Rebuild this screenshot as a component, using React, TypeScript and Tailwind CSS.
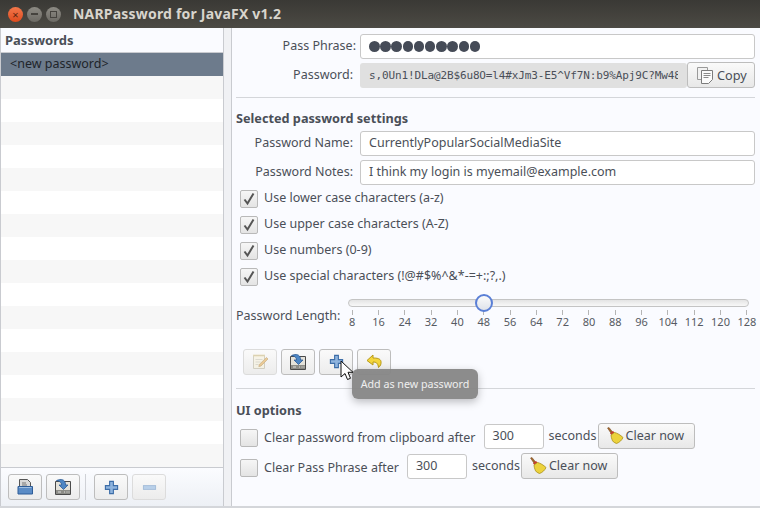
const rows = Array.from({ length: 18 }, (_, i) => i);
const ticks = [8, 16, 24, 32, 40, 48, 56, 64, 72, 80, 88, 96, 104, 112, 120, 128];

function PlusIcon() {
  return (
    <svg width="15" height="15" viewBox="0 0 16 16">
      <path d="M6 1.500h4v4.500h4.500v4H10v4.500H6V10H1.500V6H6z" fill="#8fb4de" stroke="#3e6ea8" strokeWidth="1.200" />
    </svg>
  );
}

function MinusIcon() {
  return (
    <svg width="15" height="15" viewBox="0 0 16 16">
      <rect x="1.500" y="6" width="13" height="4" fill="#b9d0e9" stroke="#a3bcd8" strokeWidth="1" />
    </svg>
  );
}

function OpenIcon() {
  return (
    <svg width="18" height="18" viewBox="0 0 18 18">
      <path d="M3.500 1.500h8l3 3v5h-11z" fill="#d8d8d8" stroke="#555" />
      <path d="M6 5h4M6 7h5" stroke="#777" />
      <path d="M2 8.500h14.500v7.500H2z" fill="#5b8cc6" stroke="#2f5d98" />
      <path d="M3 9.500h12.500" stroke="#9dbee2" />
    </svg>
  );
}

function ImportIcon() {
  return (
    <svg width="20" height="18" viewBox="0 0 20 18">
      <path d="M2.500 3.500h15v13h-15z" fill="#e4e2da" stroke="#4a4a4a" />
      <path d="M3 12h14v4H3z" fill="#8c8c86" />
      <path d="M5 14h3M11 14h1M13.500 14h1M15.500 14h1" stroke="#dcdcdc" />
      <path d="M3.500 2.500c5-2 8-1 9 3V7h2.500l-4.500 4.500L6 7h2.500V6c-.5-2-2.500-3-5-3.500z" fill="#4d86c4" stroke="#2d5c96" strokeWidth="0.8" />
    </svg>
  );
}

function NoteIcon() {
  return (
    <svg width="18" height="18" viewBox="0 0 18 18" opacity="0.55">
      <path d="M2.500 2.500h11v13h-11z" fill="#f7f2dc" stroke="#b9b49c" />
      <path d="M3 1.500v2M5 1.500v2M7 1.500v2M9 1.500v2M11 1.500v2M13 1.500v2" stroke="#d2b45a" />
      <path d="M4.500 6.500h7M4.500 9h5M4.500 11.500h3" stroke="#c9c5b2" />
      <path d="M15.500 4.500l1.500 1.500-7 7-2.200.6.600-2.200z" fill="#e4a94a" stroke="#a87a2c" strokeWidth="0.7" />
    </svg>
  );
}

function UndoIcon() {
  return (
    <svg width="18" height="18" viewBox="0 0 18 18">
      <path d="M8 2L2 7.500 8 12V9c3 0 5 1 5.500 5.500 2-1.500 2.800-3.500 2.500-6C15.500 5.500 12 5 8 5z" fill="#f4d63c" stroke="#b79a16" strokeWidth="1" strokeLinejoin="round" />
    </svg>
  );
}

function BroomIcon() {
  return (
    <svg width="18" height="18" viewBox="0 0 18 18">
      <path d="M1.500 1l1.500-.5L7 5.500 5.500 7z" fill="#a5662a" stroke="#6d4318" strokeWidth="0.5" />
      <path d="M4 6.500L7 4l1.500 1.500-3 2.500z" fill="#c8382c" />
      <path d="M5 8l3.500-2.500c2.500.5 6 2.500 8.500 5-1 2.500-3.500 5-6.500 6-2.500-1-4-2-4.500-4-.5-1.500-1-3-1-4.500z" fill="#ecd23c" stroke="#a88f18" strokeWidth="0.8" />
    </svg>
  );
}

function CopyIcon() {
  return (
    <svg width="20" height="20" viewBox="0 0 20 20">
      <path d="M2.500 2.500h10v12h-10z" fill="#f2f2f2" stroke="#9a9a9a" />
      <path d="M6.500 5.500h11v9l-4 4h-7z" fill="#fbfbfb" stroke="#7c7c7c" />
      <path d="M8.500 8.500h7M8.500 10.500h7M8.500 12.500h5" stroke="#8a8a8a" />
    </svg>
  );
}

function CheckBox({ checked, className }: { checked?: boolean; className?: string }) {
  return (
    <div className={`flex h-[18px] w-[18px] shrink-0 items-center justify-center rounded-[2px] border border-[#b9b9b9] bg-gradient-to-b from-[#f6f6f6] to-[#e4e4e4] ${className ?? ""}`}>
      {checked && (
        <svg width="14" height="14" viewBox="0 0 14 14">
          <path d="M2.500 7.500L5.500 11.500 11.500 1.500" fill="none" stroke="#555" strokeWidth="2" />
        </svg>
      )}
    </div>
  );
}

function ToolButton({ children, disabled }: { children: React.ReactNode; disabled?: boolean }) {
  return (
    <div
      className={`flex h-[26px] w-[34px] items-center justify-center rounded-[3px] border bg-gradient-to-b from-[#fafafa] to-[#ececec] ${
        disabled ? "border-[#dcdcdc]" : "border-[#bdbdbd]"
      }`}
    >
      {children}
    </div>
  );
}

function TextField({ children, className }: { children?: React.ReactNode; className?: string }) {
  return (
    <div className={`flex h-[25px] items-center rounded-[3px] border border-[#c8c8c8] bg-white pl-[8px] ${className ?? ""}`}>
      {children}
    </div>
  );
}

function ClearButton() {
  return (
    <div className="flex h-[26px] w-[97px] items-center gap-[2px] rounded-[3px] border border-[#bdbdbd] bg-gradient-to-b from-[#fafafa] to-[#e8e8e8] pl-[7px]">
      <BroomIcon />
      <span>Clear now</span>
    </div>
  );
}

export default function App() {
  return (
    <div className="relative flex h-[508px] w-[760px] flex-col overflow-hidden bg-[#fafbff] font-['Noto_Sans',sans-serif] text-[12.5px] leading-none text-[#4a4f58]">
      {/* title bar */}
      <div className="flex h-[28px] shrink-0 items-center bg-gradient-to-b from-[#3a3935] to-[#4c4a44] pl-[8px] text-[#d8d5cd]">
        <div className="flex h-[15px] w-[15px] items-center justify-center rounded-full bg-gradient-to-b from-[#f2774a] to-[#de4a1c] text-[11px] text-[#5a2510]">×</div>
        <div className="ml-[4px] flex h-[15px] w-[15px] items-center justify-center rounded-full bg-gradient-to-b from-[#8d8b84] to-[#6c6a64]">
          <div className="h-[2px] w-[7px] bg-[#45433e]" />
        </div>
        <div className="ml-[4px] flex h-[15px] w-[15px] items-center justify-center rounded-full bg-gradient-to-b from-[#8d8b84] to-[#6c6a64]">
          <div className="h-[7px] w-[7px] border border-[#45433e]" />
        </div>
        <span className="ml-[12px] text-[14px] font-bold tracking-[0.2px]">NARPassword for JavaFX v1.2</span>
      </div>

      <div className="flex min-h-0 flex-1 border-b-2 border-[#d4d6da]">
        {/* passwords list */}
        <div className="flex w-[224px] shrink-0 flex-col border-x border-[#c9cbd0]">
          <div className="flex h-[25px] shrink-0 items-center border-b border-[#c9cbd0] pl-[4px] text-[13px] font-bold">Passwords</div>
          <div className="min-h-0 flex-1 overflow-hidden border-b border-[#c9cbd0]">
            <div className="flex h-[23px] items-center bg-[#6d7b8c] pl-[9px] text-[#20242a]">&lt;new password&gt;</div>
            {rows.map((i) => (
              <div key={i} className={`h-[23px] ${i % 2 === 0 ? "bg-[#f7f7f7]" : "bg-white"}`} />
            ))}
          </div>
          <div className="flex h-[38px] shrink-0 items-center bg-gradient-to-b from-[#fbfcff] to-[#edf0f5] pl-[7px]">
            <ToolButton><OpenIcon /></ToolButton>
            <div className="ml-[4px]"><ToolButton><ImportIcon /></ToolButton></div>
            <div className="mx-[5px] h-[26px] w-px bg-[#cfd1d6]" />
            <div className="ml-[3px]"><ToolButton><PlusIcon /></ToolButton></div>
            <div className="ml-[4px]"><ToolButton disabled><MinusIcon /></ToolButton></div>
          </div>
        </div>

        <div className="w-[7px] shrink-0 bg-[#f0f1f4]" />

        {/* settings */}
        <div className="flex min-w-0 flex-1 flex-col border-l border-[#c9cbd0] pl-[4px] pr-[5px] pt-[6px]">
          <div className="flex items-center">
            <span className="w-[124px] pr-[4px] text-right">Pass Phrase:</span>
            <TextField className="w-[395px] gap-[0.7px]">
              {Array.from({ length: 10 }, (_, i) => (
                <div key={i} className="h-[10.5px] w-[10.5px] rounded-full bg-[#454b57]" />
              ))}
            </TextField>
          </div>
          <div className="mt-[3px] flex items-center">
            <span className="w-[124px] pr-[7px] text-right">Password:</span>
            <div className="flex h-[25px] w-[327px] items-center overflow-hidden rounded-[3px] bg-[#e0e0e0] px-[9px] font-['DejaVu_Sans_Mono',monospace] text-[11px] tracking-[-0.13px] whitespace-nowrap">
              <span className="block w-full overflow-hidden">s,0Un1!DLa@2B$6u8O=l4#xJm3-E5^Vf7N:b9%Apj9C?Mw48</span>
            </div>
            <div className="flex h-[26px] flex-1 items-center gap-[2px] rounded-[3px] border border-[#bdbdbd] bg-gradient-to-b from-[#fafafa] to-[#e8e8e8] pl-[7px] text-[12.7px]">
              <CopyIcon />
              <span>Copy</span>
            </div>
          </div>
          <div className="mt-[9px] h-px bg-[#d4d6da]" />

          <div className="mt-[14px] text-[12.7px] font-bold">Selected password settings</div>
          <div className="mt-[6px] flex items-center">
            <span className="w-[124px] pr-[7px] text-right">Password Name:</span>
            <TextField className="w-[395px]">CurrentlyPopularSocialMediaSite</TextField>
          </div>
          <div className="mt-[4px] flex items-center">
            <span className="w-[124px] pr-[7px] text-right">Password Notes:</span>
            <TextField className="w-[395px]">I think my login is myemail@example.com</TextField>
          </div>

          <div className="mt-[5px] flex flex-col gap-[8px] pl-[4px]">
            <label className="flex items-center gap-[6px]"><CheckBox checked />Use lower case characters (a-z)</label>
            <label className="flex items-center gap-[6px]"><CheckBox checked />Use upper case characters (A-Z)</label>
            <label className="flex items-center gap-[6px]"><CheckBox checked />Use numbers (0-9)</label>
            <label className="flex items-center gap-[6px]"><CheckBox checked />Use special characters (!@#$%^&amp;*-=+:;?,.)</label>
          </div>

          <div className="mt-[13px] flex items-start">
            <span className="mt-[11px] w-[103px] shrink-0 whitespace-nowrap">Password Length:</span>
            <div className="w-[421px] shrink-0">
              <div className="relative ml-[9px] mr-[11px] h-[8px] rounded-full border border-[#c4c4c4] bg-gradient-to-b from-[#e4e4e4] to-[#f8f8f8]">
                <div className="absolute left-[126px] top-[-6px] h-[18px] w-[18px] rounded-full border-2 border-[#5a7fd6] bg-gradient-to-b from-[#fbfbfb] to-[#dfe3ea]" />
              </div>
              <div className="mt-[3px] grid grid-cols-16 text-[11px] text-[#565a62]">
                {ticks.map((t) => (
                  <div key={t} className="flex flex-col items-center">
                    <div className="h-[5px] w-px bg-[#b5b5b5]" />
                    <span className="mt-[1px]">{t}</span>
                  </div>
                ))}
              </div>
            </div>
          </div>

          <div className="mt-[22px] flex gap-[4px] pl-[7px]">
            <ToolButton disabled><NoteIcon /></ToolButton>
            <ToolButton><ImportIcon /></ToolButton>
            <ToolButton><PlusIcon /></ToolButton>
            <ToolButton><UndoIcon /></ToolButton>
          </div>
          <div className="mt-[13px] h-px bg-[#d4d6da]" />

          <div className="mt-[15px] text-[12.7px] font-bold">UI options</div>
          <div className="mt-[7px] flex items-center pl-[4px]">
            <CheckBox className="mt-[3px]" />
            <span className="ml-[6px] mt-[3px]">Clear password from clipboard after</span>
            <TextField className="ml-[8px] w-[60px]">300</TextField>
            <span className="ml-[5px]">seconds</span>
            <div className="ml-[1px]"><ClearButton /></div>
          </div>
          <div className="mt-[4px] flex items-center pl-[4px]">
            <CheckBox className="mt-[3px]" />
            <span className="ml-[6px] mt-[3px]">Clear Pass Phrase after</span>
            <TextField className="ml-[8px] w-[60px]">300</TextField>
            <span className="ml-[5px]">seconds</span>
            <div className="ml-[1px]"><ClearButton /></div>
          </div>
        </div>
      </div>

      {/* tooltip */}
      <div className="absolute left-[352px] top-[369px] flex h-[30px] w-[126px] items-center justify-center rounded-[6px] bg-[#868686]/95 text-[10.7px] text-[#efefef] shadow-[0_3px_8px_rgba(0,0,0,0.25)]">
        Add as new password
      </div>

      {/* mouse pointer */}
      <svg className="absolute left-[340px] top-[360px]" width="14" height="22" viewBox="0 0 14 22">
        <path d="M1 1v16l4-3.500 2.500 6 3-1.200-2.500-6h5z" fill="#fff" stroke="#111" strokeWidth="1" strokeLinejoin="round" />
      </svg>
    </div>
  );
}
